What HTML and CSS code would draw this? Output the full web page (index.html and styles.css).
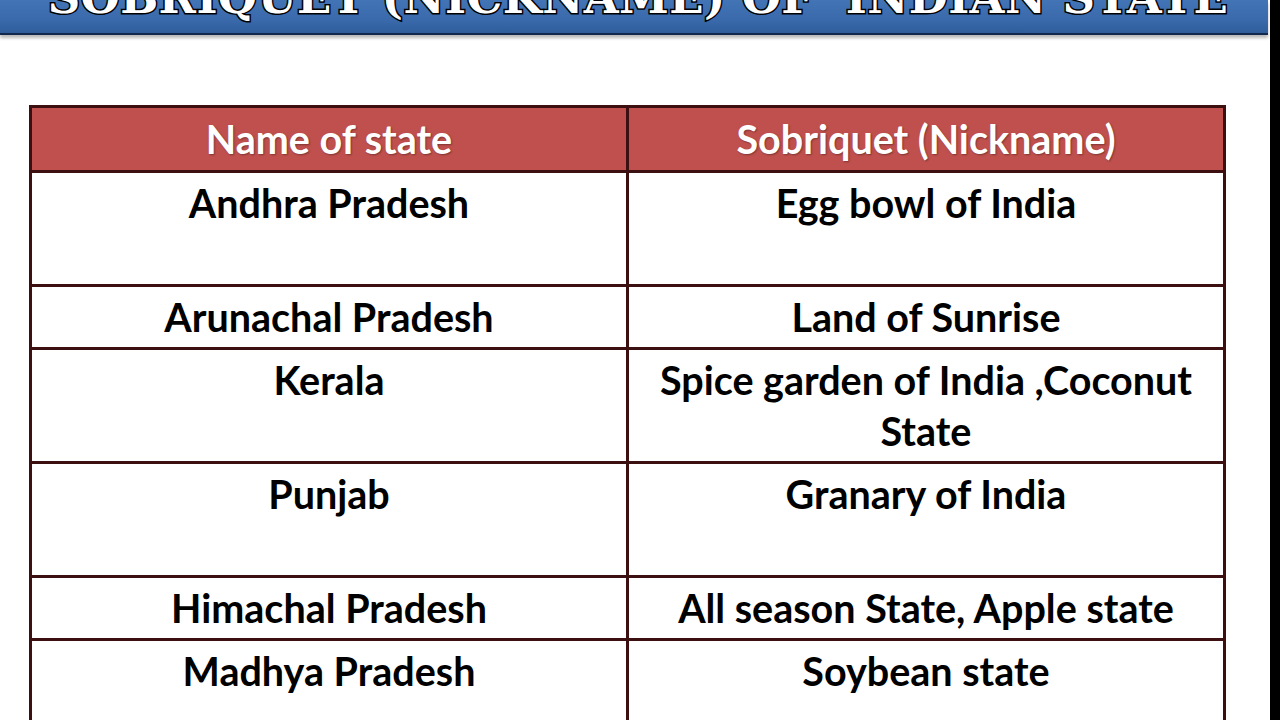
FILE: index.html
```html
<!DOCTYPE html>
<html lang="en">
<head>
<meta charset="utf-8">
<title>Sobriquet (Nickname) of Indian State</title>
<link rel="stylesheet" href="styles.css">
</head>
<body>
<div class="page">
  <div class="slide">
    <header class="banner">
      <h1 class="title">SOBRIQUET (NICKNAME) OF &nbsp;INDIAN STATE</h1>
    </header>
    <div class="grid">
      <div class="cell head">Name of state</div>
      <div class="cell head">Sobriquet (Nickname)</div>

      <div class="cell tall">Andhra Pradesh</div>
      <div class="cell tall">Egg bowl of India</div>

      <div class="cell">Arunachal Pradesh</div>
      <div class="cell">Land of Sunrise</div>

      <div class="cell tall">Kerala</div>
      <div class="cell tall">Spice garden of India ,Coconut State</div>

      <div class="cell tall">Punjab</div>
      <div class="cell tall">Granary of India</div>

      <div class="cell">Himachal Pradesh</div>
      <div class="cell">All season State, Apple state</div>

      <div class="cell tall">Madhya Pradesh</div>
      <div class="cell tall">Soybean state</div>
    </div>
  </div>
  <div class="edge"></div>
</div>
</body>
</html>
```

FILE: styles.css
```css
html, body {
  margin: 0;
  padding: 0;
  background: #ffffff;
}

.page {
  display: flex;
  width: 1280px;
  height: 720px;
  overflow: hidden;
}

.slide {
  width: 1270px;
  height: 720px;
  background: #ffffff;
  overflow: hidden;
}

.edge {
  width: 10px;
  height: 720px;
  background: #000000;
}

.banner {
  width: 1268px;
  height: 33px;
  background: linear-gradient(#4274b6, #3a6aab 60%, #2f5d9c);
  border-bottom: 2px solid #13284d;
  box-shadow: 0 3px 3px rgba(0, 0, 0, 0.28);
  overflow: hidden;
}

.title {
  margin: -30px 0 0 0;
  padding-left: 8px;
  font-family: "DejaVu Serif", serif;
  font-weight: bold;
  font-size: 45px;
  line-height: 56px;
  letter-spacing: 0.4px;
  color: #ffffff;
  text-align: center;
  white-space: nowrap;
  -webkit-text-stroke: 3px #000000;
  paint-order: stroke fill;
}

.grid {
  display: grid;
  grid-template-columns: 1fr 1fr;
  width: 1197px;
  box-sizing: border-box;
  margin: 70px 0 0 29px;
  border-top: 3px solid #3c1010;
  border-left: 3px solid #3c1010;
}

.cell {
  border-right: 3px solid #3c1010;
  border-bottom: 3px solid #3c1010;
  padding: 4px 12px 5px;
  min-height: 51px;
  font-family: "Lato", "Liberation Sans", sans-serif;
  font-weight: bold;
  font-size: 39.5px;
  line-height: 51px;
  color: #000000;
  text-align: center;
}

.head {
  background: #c0504d;
  color: #ffffff;
  padding: 5px 12px 6px;
  text-shadow: 1px 1px 2px rgba(0, 0, 0, 0.35);
}

.tall {
  min-height: 102px;
}
```
